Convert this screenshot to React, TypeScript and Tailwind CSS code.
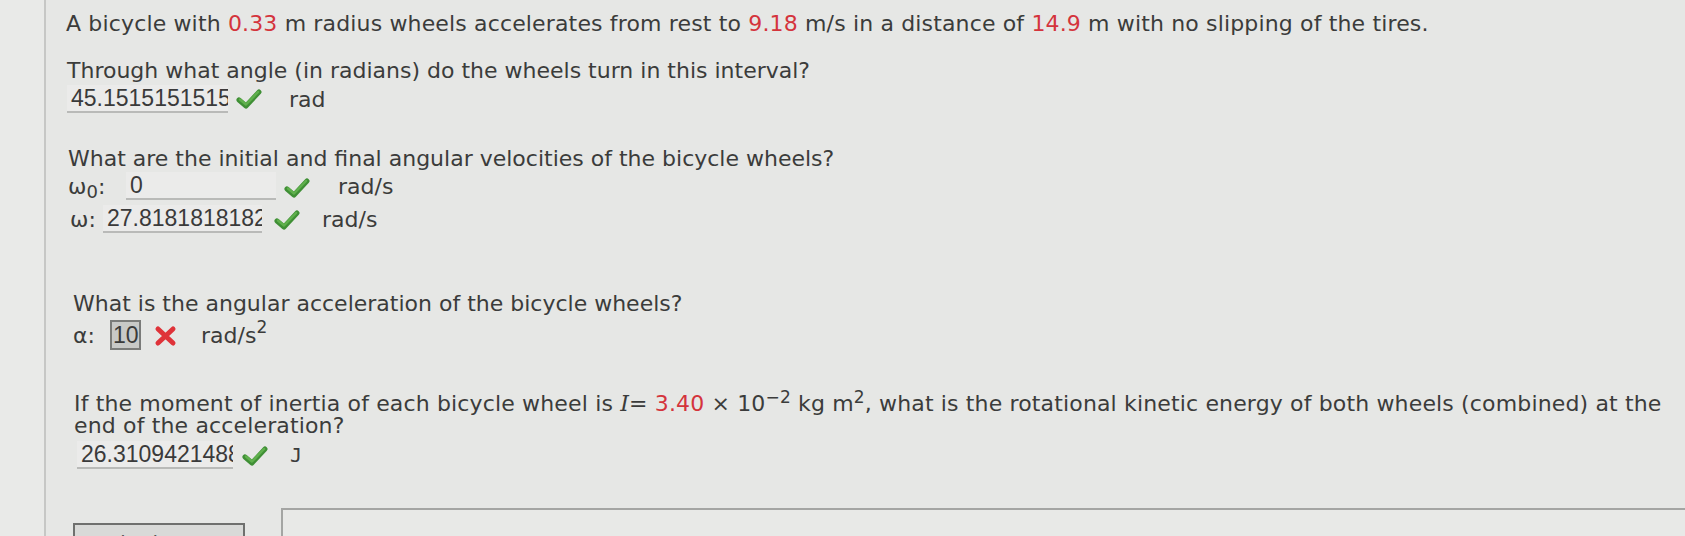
import React from 'react';

const body = "font-['DejaVu_Sans',_Verdana,_sans-serif] text-[22px] text-[#3b3c3b]";
const num = "font-['Liberation_Sans',_Arial,_sans-serif] text-[23px] text-[#3a3a3a]";

function Check() {
  return (
    <svg width="26" height="22" viewBox="0 0 26 22" className="shrink-0">
      <path d="M3 12 L10 18 L23 4" fill="none" stroke="#3f8f35" strokeWidth="5" strokeLinecap="round" strokeLinejoin="round" />
      <path d="M4 11.5 L10 16.5 L22 4" fill="none" stroke="#5fb04c" strokeWidth="2.5" strokeLinecap="round" strokeLinejoin="round" />
    </svg>
  );
}

function Cross() {
  return (
    <svg width="23" height="22" viewBox="0 0 23 22" className="shrink-0">
      <path d="M4 4 L19 18 M19 4 L4 18" fill="none" stroke="#df3339" strokeWidth="5" strokeLinecap="round" />
    </svg>
  );
}

function Field({ value, width }: { value: string; width: string }) {
  return (
    <div className={`${width} h-[28px] shrink-0 overflow-hidden whitespace-nowrap bg-[#ebebea] border-b-2 border-[#b9bab8] pl-[4px] leading-[27px] ${num}`}>
      {value}
    </div>
  );
}

export default function App() {
  return (
    <div className="h-[536px] w-full overflow-hidden bg-[#e6e7e5] flex">
      <div className="w-[44px] shrink-0 bg-[#e9eae8]" />
      <div className={`flex-1 min-w-0 border-l-2 border-[#c6c7c5] pl-[20px] pt-[11px] flex flex-col ${body}`}>
        <div className="h-[26px] leading-[26px] whitespace-nowrap tracking-[0.15px]">
          A bicycle with <span className="text-[#d4343c]">0.33</span> m radius wheels accelerates from rest to{' '}
          <span className="text-[#d4343c]">9.18</span> m/s in a distance of <span className="text-[#d4343c]">14.9</span> m with no
          slipping of the tires.
        </div>

        <div className="mt-[21px] ml-[1px] h-[26px] leading-[26px] whitespace-nowrap">
          Through what angle (in radians) do the wheels turn in this interval?
        </div>
        <div className="mt-[1px] ml-[1px] h-[28px] flex items-center">
          <Field value="45.1515151515" width="w-[161px]" />
          <div className="ml-[8px]"><Check /></div>
          <span className="ml-[27px]">rad</span>
        </div>

        <div className="mt-[33px] ml-[2px] h-[26px] leading-[26px] whitespace-nowrap">
          What are the initial and final angular velocities of the bicycle wheels?
        </div>
        <div className="ml-[2px] h-[28px] flex items-center">
          <div className="w-[58px] shrink-0 whitespace-nowrap">
            ω<sub className="text-[18px]">0</sub>:
          </div>
          <Field value="0" width="w-[150px]" />
          <div className="ml-[8px] mt-[4px]"><Check /></div>
          <span className="ml-[28px]">rad/s</span>
        </div>
        <div className="mt-[5px] ml-[4px] h-[28px] flex items-center">
          <div className="w-[33px] shrink-0">ω:</div>
          <Field value="27.8181818182" width="w-[159px]" />
          <div className="ml-[12px] mt-[2px]"><Check /></div>
          <span className="ml-[22px]">rad/s</span>
        </div>

        <div className="mt-[58px] ml-[7px] h-[26px] leading-[26px] whitespace-nowrap">
          What is the angular acceleration of the bicycle wheels?
        </div>
        <div className="mt-[3px] ml-[7px] h-[30px] flex items-center">
          <div className="w-[37px] shrink-0">α:</div>
          <div className={`w-[31px] h-[30px] shrink-0 bg-[#c8c9c7] border-2 border-[#7a7b79] leading-[26px] pl-[1px] ${num}`}>10</div>
          <div className="ml-[13px] mt-[2px]"><Cross /></div>
          <span className="ml-[24px] whitespace-nowrap">
            rad/s<sup className="text-[17px] -top-[10px]">2</sup>
          </span>
        </div>

        <div className="mt-[43px] ml-[8px] leading-[22px] whitespace-nowrap tracking-[0.15px]">
          If the moment of inertia of each bicycle wheel is{' '}
          <span className="font-['DejaVu_Serif',_serif] italic">I</span>= <span className="text-[#d4343c]">3.40</span> × 10
          <sup className="text-[17px]">−2</sup> kg m<sup className="text-[17px]">2</sup>, what is the rotational kinetic energy of both
          wheels (combined) at the
          <br />
          end of the acceleration?
        </div>
        <div className="mt-[4px] ml-[11px] h-[28px] flex items-center">
          <Field value="26.3109421488" width="w-[156px]" />
          <div className="ml-[9px] mt-[2px]"><Check /></div>
          <span className="ml-[22px] font-['DejaVu_Sans_Mono',_monospace] text-[20px]">J</span>
        </div>

        <div className="mt-[39px] flex items-start">
          <div className="ml-[7px] mt-[15px] w-[172px] h-[40px] shrink-0 bg-[#d9dad8] border-2 border-[#6f706e] pl-[20px] pt-[6px] leading-[24px] text-[20px] text-[#555]">
            Submit Answer
          </div>
          <div className="ml-[36px] flex-1 h-[60px] border-t-2 border-l-2 border-[#a4a5a3] bg-[#e8e9e7]" />
        </div>
      </div>
    </div>
  );
}
